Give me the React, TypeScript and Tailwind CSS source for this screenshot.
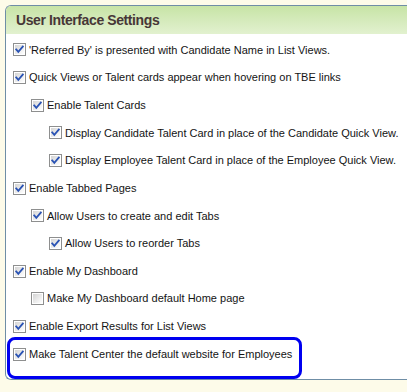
import React from "react";

type Item = { label: string; level: number; checked: boolean };

const items: Item[] = [
  { label: "'Referred By' is presented with Candidate Name in List Views.", level: 0, checked: true },
  { label: "Quick Views or Talent cards appear when hovering on TBE links", level: 0, checked: true },
  { label: "Enable Talent Cards", level: 1, checked: true },
  { label: "Display Candidate Talent Card in place of the Candidate Quick View.", level: 2, checked: true },
  { label: "Display Employee Talent Card in place of the Employee Quick View.", level: 2, checked: true },
  { label: "Enable Tabbed Pages", level: 0, checked: true },
  { label: "Allow Users to create and edit Tabs", level: 1, checked: true },
  { label: "Allow Users to reorder Tabs", level: 2, checked: true },
  { label: "Enable My Dashboard", level: 0, checked: true },
  { label: "Make My Dashboard default Home page", level: 1, checked: false },
  { label: "Enable Export Results for List Views", level: 0, checked: true },
];

const indent = ["pl-[7px]", "pl-[25px]", "pl-[43px]"];

function Checkbox({ checked }: { checked: boolean }) {
  return (
    <svg width="13" height="13" viewBox="0 0 13 13" className="shrink-0">
      <defs>
        <linearGradient id="cbg" x1="0" y1="0" x2="1" y2="1">
          <stop offset="0" stopColor="#d4d4d4" />
          <stop offset="1" stopColor="#ffffff" />
        </linearGradient>
      </defs>
      <rect x="0.5" y="0.5" width="12" height="12" fill="#ffffff" stroke="#8e8f8f" />
      <rect x="2" y="2" width="9" height="9" fill="url(#cbg)" />
      {checked && (
        <path d="M3.2 6.4 L5.3 8.8 L9.8 3.6" fill="none" stroke="#2a53b4" strokeWidth="1.8" strokeLinecap="square" />
      )}
    </svg>
  );
}

function Row({ item }: { item: Item }) {
  return (
    <div className={`flex h-[27.67px] items-center gap-[3px] ${indent[item.level]}`}>
      <Checkbox checked={item.checked} />
      <span className="whitespace-nowrap">{item.label}</span>
    </div>
  );
}

export default function App() {
  return (
    <div className="h-[392px] w-[407px] overflow-hidden bg-[#fdfbe9] pl-[5px] pt-[5px] font-['Liberation_Sans',Arial,sans-serif] text-[11px] text-[#141414]">
      <div className="w-[420px] overflow-hidden rounded-l-[6px] border-y border-l border-[#6f8ea6] bg-white">
        <div className="flex h-[28px] items-center bg-gradient-to-b from-[#c7e4a6] to-[#e2f1cf] pl-[10px] text-[14px] font-bold tracking-[-0.4px] text-[#473737]">
          User Interface Settings
        </div>
        <div className="pt-[2px]">
          {items.map((item) => (
            <Row key={item.label} item={item} />
          ))}
          <div className="-mt-[3px] ml-[1px] w-[295px] rounded-[8px] border-[3px] border-[#0000f0] pb-[7px] pl-[3px]">
            <div className="flex h-[29px] items-center gap-[3px]">
              <Checkbox checked />
              <span className="whitespace-nowrap">Make Talent Center the default website for Employees</span>
            </div>
          </div>
        </div>
      </div>
    </div>
  );
}
